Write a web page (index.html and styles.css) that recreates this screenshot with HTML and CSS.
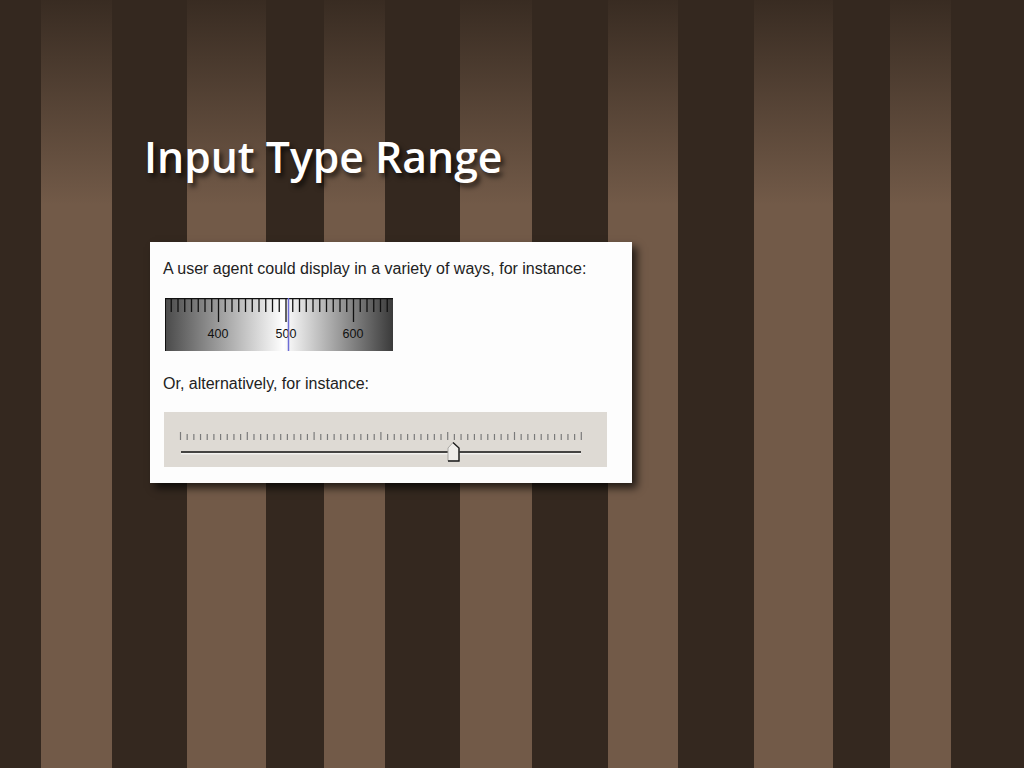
FILE: index.html
```html
<!DOCTYPE html>
<html lang="en">
<head>
  <meta charset="UTF-8" />
  <meta name="viewport" content="width=device-width, initial-scale=1.0" />
  <title>Input Type Range</title>
  <link rel="stylesheet" href="styles.css">
</head>
<body>
  <main class="slide">
    <h1 class="slide-title">Input Type Range</h1>

    <section class="card">
      <p class="card-text">A user agent could display in a variety of ways, for instance:</p>

      <!-- Ruler style rendering -->
      <svg class="ruler" width="228" height="53" viewBox="0 0 228 53">
        <defs>
          <linearGradient id="rulerFill" x1="0" y1="0" x2="1" y2="0">
            <stop offset="0" stop-color="#4a4a4a" />
            <stop offset="0.52" stop-color="#ffffff" />
            <stop offset="1" stop-color="#3a3a3a" />
          </linearGradient>
        </defs>
        <rect x="0" y="0" width="228" height="53" fill="url(#rulerFill)" />
        <line x1="0" y1="0.5" x2="228" y2="0.5" stroke="#111" stroke-width="1.5" />
        <line x1="0.5" y1="0" x2="0.5" y2="53" stroke="#111" stroke-width="1" />
        <g id="rulerTicks" stroke="#111" stroke-width="1.3"></g>
        <g class="ruler-labels" font-family="Liberation Sans, Arial, sans-serif" font-size="12.5" fill="#111" text-anchor="middle">
          <text x="53" y="39.5">400</text>
          <text x="121" y="39.5">500</text>
          <text x="188" y="39.5">600</text>
        </g>
        <line x1="123.5" y1="0" x2="123.5" y2="53" stroke="#6d6dd6" stroke-width="1.5" />
      </svg>

      <p class="card-text">Or, alternatively, for instance:</p>

      <!-- Classic slider rendering -->
      <div class="slider-box">
        <svg class="slider" width="443" height="55" viewBox="0 0 443 55">
          <g id="sliderTicks" stroke="#7a7a7a" stroke-width="1.2"></g>
          <line x1="17" y1="40" x2="417" y2="40" stroke="#111" stroke-width="1.6" />
          <line x1="17" y1="41.8" x2="417" y2="41.8" stroke="#fbfbfa" stroke-width="1" />
          <path d="M284 36 L289 30.5 L295 36 L295 49 L284 49 Z" fill="#efedea" stroke="#a9a7a3" stroke-width="1" />
          <path d="M289 30.5 L295 36 L295 49 L284 49" fill="none" stroke="#1e1e1e" stroke-width="1.4" />
        </svg>
      </div>
    </section>
  </main>

  <script>
    // Build tick marks for both the ruler and the slider.
    const svgNS = "http://www.w3.org/2000/svg";

    function addTick(group, x, y1, y2) {
      let line = document.createElementNS(svgNS, "line");
      line.setAttribute("x1", x);
      line.setAttribute("x2", x);
      line.setAttribute("y1", y1);
      line.setAttribute("y2", y2);
      group.appendChild(line);
    }

    let rulerTicks = document.getElementById("rulerTicks");
    for (let i = -7; i <= 26; i++) {
      let x = 53.5 + i * 6.75;
      if (x < 2 || x > 226) continue;
      let major = i % 10 === 0;
      addTick(rulerTicks, x, 1, major ? 24 : 14);
    }

    let sliderTicks = document.getElementById("sliderTicks");
    for (let i = 0; i <= 60; i++) {
      let x = 16.5 + i * 6.68;
      let major = i % 10 === 0;
      addTick(sliderTicks, x, major ? 20 : 22, 28);
    }
  </script>
</body>
</html>
```

FILE: styles.css
```css
html, body {
  margin: 0;
  padding: 0;
}

body {
  min-height: 768px;
  font-family: "Liberation Sans", Arial, sans-serif;
  background-color: #34281f;
  background-image:
    linear-gradient(to bottom, rgba(52, 40, 31, 0.93) 0, rgba(52, 40, 31, 0) 205px),
    linear-gradient(to right,
      #34281f 0, #34281f 41px,
      #725a48 41px, #725a48 112px,
      #34281f 112px, #34281f 187px,
      #725a48 187px, #725a48 266px,
      #34281f 266px, #34281f 324px,
      #725a48 324px, #725a48 385px,
      #34281f 385px, #34281f 460px,
      #725a48 460px, #725a48 532px,
      #34281f 532px, #34281f 608px,
      #725a48 608px, #725a48 678px,
      #34281f 678px, #34281f 754px,
      #725a48 754px, #725a48 833px,
      #34281f 833px, #34281f 890px,
      #725a48 890px, #725a48 951px,
      #34281f 951px, #34281f 1024px);
  background-repeat: no-repeat;
  background-size: 1024px 768px;
}

.slide {
  padding: 133px 0 0 144px;
}

/* Slide heading */
.slide-title {
  margin: 0;
  font-family: "Open Sans", sans-serif;
  font-weight: 600;
  font-size: 42.7px;
  line-height: 48px;
  color: #ffffff;
  text-shadow: 3px 4px 5px rgba(0, 0, 0, 0.65);
}

/* White example panel */
.card {
  width: 469px;
  margin: 61px 0 0 6px;
  padding: 18px 0 16px 13px;
  background-color: #fdfdfd;
  box-shadow: 5px 5px 8px rgba(0, 0, 0, 0.7);
}

.card-text {
  margin: 0;
  font-size: 16px;
  line-height: 18px;
  color: #222222;
}

.ruler {
  display: block;
  margin: 20px 0 24px 2px;
}

.slider-box {
  width: 443px;
  height: 55px;
  margin: 19px 0 0 1px;
  background-color: #dedad4;
}

.slider {
  display: block;
}
```
